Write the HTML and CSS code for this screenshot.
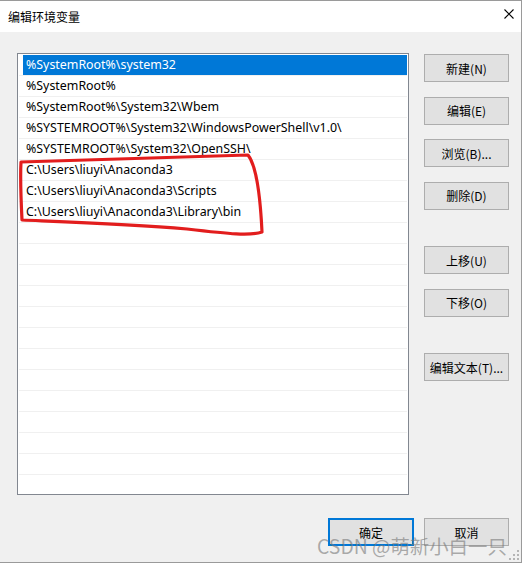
FILE: index.html
```html
<!DOCTYPE html>
<html lang="zh-CN">
<head>
    <meta charset="UTF-8">
    <title>编辑环境变量</title>
    <link rel="stylesheet" href="styles.css">
</head>
<body>

    <div class="window">
        <div class="titlebar">
            <div class="title">编辑环境变量</div>
            <div class="close">
                <svg width="10" height="10" viewBox="0 0 10 10">
                    <path d="M0.5 0.5 L9.5 9.5 M9.5 0.5 L0.5 9.5" stroke="#000" stroke-width="1.1" fill="none"/>
                </svg>
            </div>
        </div>

        <div class="content">
            <div class="main">
                <div class="list">
                    <div class="row selected"><span class="text">%SystemRoot%\system32</span></div>
                    <div class="row"><span class="text">%SystemRoot%</span></div>
                    <div class="row"><span class="text">%SystemRoot%\System32\Wbem</span></div>
                    <div class="row"><span class="text">%SYSTEMROOT%\System32\WindowsPowerShell\v1.0\</span></div>
                    <div class="row"><span class="text">%SYSTEMROOT%\System32\OpenSSH\</span></div>
                    <div class="row"><span class="text">C:\Users\liuyi\Anaconda3</span></div>
                    <div class="row"><span class="text">C:\Users\liuyi\Anaconda3\Scripts</span></div>
                    <div class="row"><span class="text">C:\Users\liuyi\Anaconda3\Library\bin</span></div>
                    <div class="row"></div>
                    <div class="row"></div>
                    <div class="row"></div>
                    <div class="row"></div>
                    <div class="row"></div>
                    <div class="row"></div>
                    <div class="row"></div>
                    <div class="row"></div>
                    <div class="row"></div>
                    <div class="row"></div>
                    <div class="row"></div>
                    <div class="row"></div>
                    <div class="row"></div>
                </div>

                <div class="buttons">
                    <div class="btn">新建(N)</div>
                    <div class="btn">编辑(E)</div>
                    <div class="btn">浏览(B)...</div>
                    <div class="btn">删除(D)</div>
                    <div class="btn far">上移(U)</div>
                    <div class="btn">下移(O)</div>
                    <div class="btn far">编辑文本(T)...</div>
                </div>
            </div>

            <div class="footer">
                <div class="btn default">确定</div>
                <div class="btn">取消</div>
            </div>
        </div>

        <!-- red pen mark round the Anaconda rows -->
        <svg class="mark" width="522" height="563" viewBox="0 0 522 563">
            <path d="M22 220 C21 200 20 180 21 162 C60 161 150 158 248 155 C256 165 260 190 262 232 C250 236 230 234 187 229 C130 224 70 222 22 220 Z"
                  stroke="#e21d1d" stroke-width="3.2" fill="none" stroke-linejoin="round"/>
        </svg>

        <div class="watermark">CSDN @萌新小白一只</div>

        <svg class="grip" width="10" height="10" viewBox="0 0 10 10">
            <rect x="8" y="0" width="2" height="2" fill="#b4b4b4"/>
            <rect x="4" y="4" width="2" height="2" fill="#b4b4b4"/>
            <rect x="8" y="4" width="2" height="2" fill="#b4b4b4"/>
            <rect x="0" y="8" width="2" height="2" fill="#b4b4b4"/>
            <rect x="4" y="8" width="2" height="2" fill="#b4b4b4"/>
            <rect x="8" y="8" width="2" height="2" fill="#b4b4b4"/>
        </svg>
    </div>

</body>
</html>
```

FILE: styles.css
```css
/* dialog */
body {
    margin: 0;
    background-color: #fff;
    font-family: "Noto Sans", "Noto Sans CJK SC", sans-serif;
    font-size: 12px;
    color: #000;
}

.window {
    width: 521px;
    height: 561px;
    border-top: 1px solid #9a9a9a;
    border-right: 1px solid #9a9a9a;
    border-bottom: 1px solid #9a9a9a;
    background-color: #f0f0f0;
    position: relative;
    display: flex;
    flex-direction: column;
}

.titlebar {
    height: 31px;
    background-color: #fff;
    display: flex;
    align-items: center;
    justify-content: space-between;
    padding: 0 7px 0 8px;
}

.title {
    font-family: "Noto Sans CJK SC", sans-serif;
    font-size: 12px;
    margin-top: -1px;
}

.close {
    width: 10px;
    height: 10px;
    margin-top: -6px;
}

.close svg {
    display: block;
}

.content {
    padding: 21px 12px 0 17px;
}

.main {
    display: flex;
    align-items: flex-start;
}

.list {
    width: 390px;
    height: 439px;
    border: 1px solid #828790;
    background-color: #fff;
    padding: 1px 1px 0 1px;
    overflow: hidden;
}

.row {
    height: 20px;
    border-bottom: 1px solid #f0f0f0;
    padding-left: 4px;
    display: flex;
}

.row .text {
    flex: 1;
    padding-left: 3px;
    line-height: 20px;
    font-size: 12.4px;
    white-space: nowrap;
}

.row.selected .text {
    background-color: #0078d7;
    color: #fff;
}

.buttons {
    margin-left: 15px;
    padding-top: 1px;
    display: flex;
    flex-direction: column;
}

.btn {
    width: 83px;
    height: 26px;
    border: 1px solid #adadad;
    background-color: #e1e1e1;
    display: flex;
    align-items: center;
    justify-content: center;
    font-family: "Noto Sans CJK SC", sans-serif;
    font-size: 12px;
    margin-bottom: 14.5px;
}

.btn.far {
    margin-top: 22px;
}

.footer {
    display: flex;
    justify-content: flex-end;
    gap: 10px;
    margin-top: 23px;
}

.footer .btn {
    margin-bottom: 0;
}

.btn.default {
    width: 82px;
    height: 24px;
    border: 2px solid #0078d7;
}

.mark {
    position: absolute;
    left: 0;
    top: -1px;
    pointer-events: none;
}

.watermark {
    position: absolute;
    left: 317px;
    top: 530px;
    font-family: "Noto Sans CJK SC", sans-serif;
    font-size: 19.4px;
    color: rgba(120, 120, 120, 0.6);
    white-space: nowrap;
}

.grip {
    position: absolute;
    right: 2px;
    bottom: 2px;
}
```
